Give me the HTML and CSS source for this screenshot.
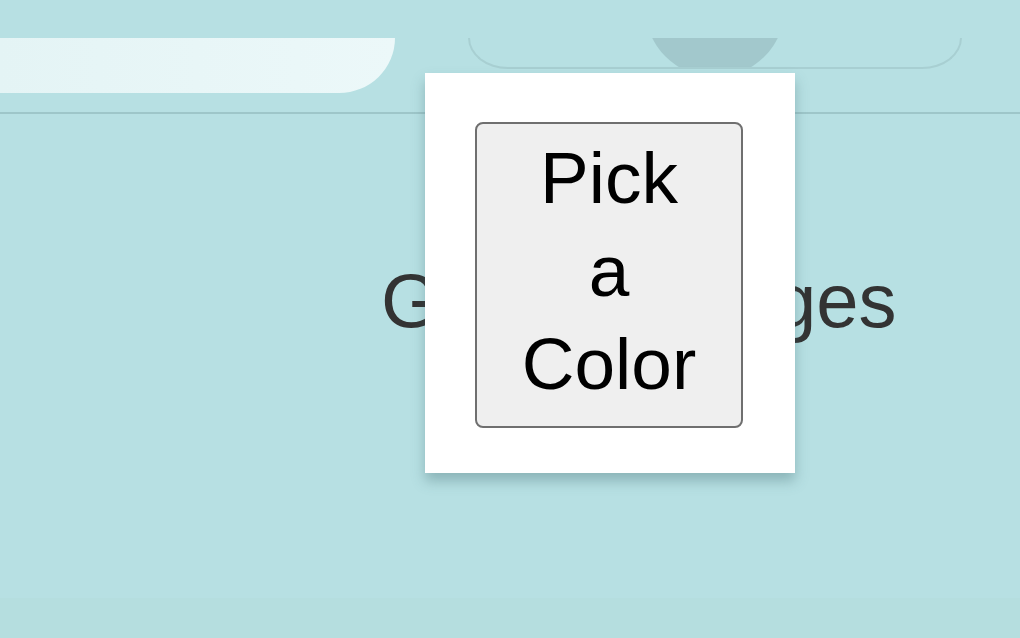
FILE: index.html
```html
<!DOCTYPE html>
<html lang="en">
<head>
<meta charset="utf-8">
<title>Pick a Color</title>
<link rel="stylesheet" href="styles.css">
</head>
<body>
<div class="page">
  <div class="topbar"></div>
  <nav class="nav">
    <div class="search-pill"></div>
    <div class="tabs-pill"><div class="tabs-knob"></div></div>
  </nav>
  <main class="main">
    <h1 class="title">Google Images</h1>
  </main>
  <footer class="footer"></footer>
  <div class="popup">
    <button class="pick-btn" type="button">Pick a Color</button>
  </div>
</div>
</body>
</html>
```
FILE: styles.css
```css
* { box-sizing: border-box; }
html, body {
  margin: 0;
  padding: 0;
  background: #b7e0e3;
}
.page {
  position: relative;
  width: 1020px;
  height: 638px;
  overflow: hidden;
  display: flex;
  flex-direction: column;
  font-family: "Liberation Sans", Arial, sans-serif;
}
.topbar {
  height: 38px;
  flex: none;
}
.nav {
  height: 76px;
  flex: none;
  display: flex;
  align-items: flex-start;
  border-bottom: 2px solid #9ec6c9;
}
.search-pill {
  width: 395px;
  height: 55px;
  background: linear-gradient(90deg, #e4f4f5, #ecf8f9);
  border-bottom-right-radius: 56px 55px;
}
.tabs-pill {
  margin-left: 73px;
  width: 494px;
  height: 31px;
  border: 2px solid #a8cfd2;
  border-top: none;
  border-radius: 0 0 40px 40px / 0 0 31px 31px;
  overflow: hidden;
}
.tabs-knob {
  width: 140px;
  height: 140px;
  margin-top: -101px;
  margin-left: 175px;
  border-radius: 50%;
  background: #a2c8cc;
}
.main {
  flex: 1;
  padding-left: 381px;
  padding-top: 149px;
}
.title {
  margin: 0;
  font-weight: normal;
  font-size: 76px;
  line-height: 1;
  color: #333;
}
.footer {
  height: 40px;
  flex: none;
  background: #b5dedf;
}
.popup {
  position: absolute;
  left: 425px;
  top: 73px;
  width: 370px;
  height: 400px;
  background: #fff;
  padding: 49px 52px 45px 50px;
  box-shadow: 0 8px 12px rgba(60, 100, 105, 0.35);
}
.pick-btn {
  display: block;
  width: 268px;
  height: 306px;
  margin: 0;
  padding: 7px 40px 17px;
  border: 2px solid #6f6f6f;
  border-radius: 8px;
  background: #efefef;
  color: #000;
  font-family: "Liberation Sans", Arial, sans-serif;
  font-size: 73px;
  line-height: 93px;
  text-align: center;
}
```
